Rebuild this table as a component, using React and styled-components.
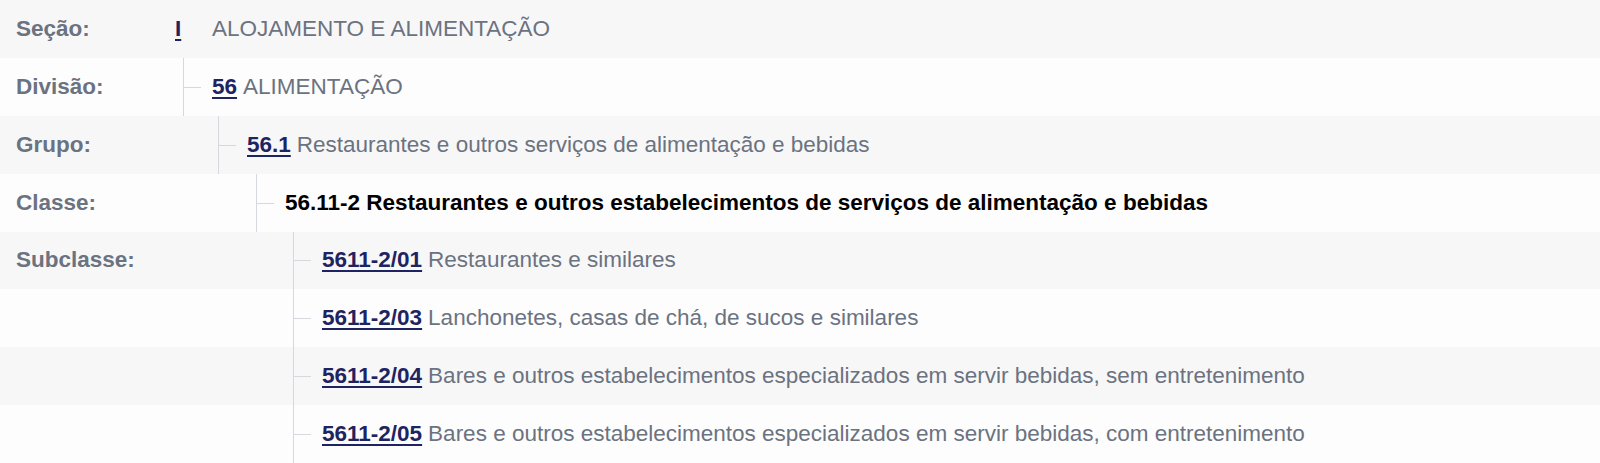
import React from 'react';
import styled, { createGlobalStyle } from 'styled-components';

const GlobalStyle = createGlobalStyle`
  html, body {
    margin: 0;
    padding: 0;
    background: #fdfdfd;
  }
  body {
    font-family: "Liberation Sans", Arial, Helvetica, sans-serif;
    -webkit-font-smoothing: antialiased;
  }
`;

const ROW_HEIGHT = 57.875;
// x of the tree line for each level, measured from the start of the content column
const LINE_OFFSETS = [0, 8, 43, 81, 118];

const Table = styled.div`
  display: flex;
  flex-direction: column;
  width: 100%;
`;

const Row = styled.div`
  display: grid;
  grid-template-columns: 175px 1fr;
  height: ${ROW_HEIGHT}px;
  background: ${(p) => (p.$shaded ? '#f7f7f8' : '#fdfdfd')};
  font-size: 22.5px;
  line-height: 26px;
`;

const Label = styled.div`
  display: flex;
  align-items: center;
  padding-left: 16px;
  font-weight: 700;
  color: #6b7280;
`;

const Content = styled.div`
  display: flex;
  align-items: stretch;
  min-width: 0;
`;

const Branch = styled.div`
  position: relative;
  display: flex;
  align-items: center;
  margin-left: ${(p) => p.$offset}px;
  padding-left: 28px;
  border-left: 1px solid #d5d8de;

  &::before {
    content: '';
    position: absolute;
    left: 0;
    top: 50%;
    width: 17px;
    height: 1px;
    background: #d5d8de;
  }
`;

const Root = styled.div`
  display: flex;
  align-items: center;
`;

const Code = styled.a`
  font-weight: 700;
  color: #1e2462;
  text-decoration: underline;
  text-decoration-thickness: 2px;
  text-underline-offset: 3px;
  min-width: ${(p) => (p.$wide ? '37px' : 'auto')};
  margin-right: ${(p) => (p.$wide ? '0' : '6px')};
  cursor: pointer;
`;

const Description = styled.span`
  color: #6b7280;
  white-space: nowrap;
`;

const Current = styled.span`
  font-weight: 700;
  color: #000;
  white-space: nowrap;
`;

const rows = [
  { label: 'Seção:', level: 0, code: 'I', text: 'ALOJAMENTO E ALIMENTAÇÃO' },
  { label: 'Divisão:', level: 1, code: '56', text: 'ALIMENTAÇÃO' },
  { label: 'Grupo:', level: 2, code: '56.1', text: 'Restaurantes e outros serviços de alimentação e bebidas' },
  {
    label: 'Classe:',
    level: 3,
    current: '56.11-2 Restaurantes e outros estabelecimentos de serviços de alimentação e bebidas',
  },
  { label: 'Subclasse:', level: 4, code: '5611-2/01', text: 'Restaurantes e similares' },
  { label: '', level: 4, code: '5611-2/03', text: 'Lanchonetes, casas de chá, de sucos e similares' },
  {
    label: '',
    level: 4,
    code: '5611-2/04',
    text: 'Bares e outros estabelecimentos especializados em servir bebidas, sem entretenimento',
  },
  {
    label: '',
    level: 4,
    code: '5611-2/05',
    text: 'Bares e outros estabelecimentos especializados em servir bebidas, com entretenimento',
  },
];

const Entry = ({ row }) => {
  const body = row.current ? (
    <Current>{row.current}</Current>
  ) : (
    <>
      <Code $wide={row.level === 0}>{row.code}</Code>
      <Description>{row.text}</Description>
    </>
  );

  if (row.level === 0) return <Root>{body}</Root>;

  return <Branch $offset={LINE_OFFSETS[row.level]}>{body}</Branch>;
};

const App = () => {
  return (
    <>
      <GlobalStyle />
      <Table>
        {rows.map((row, i) => (
          <Row key={i} $shaded={i % 2 === 0}>
            <Label>{row.label}</Label>
            <Content>
              <Entry row={row} />
            </Content>
          </Row>
        ))}
      </Table>
    </>
  );
};

export default App;
